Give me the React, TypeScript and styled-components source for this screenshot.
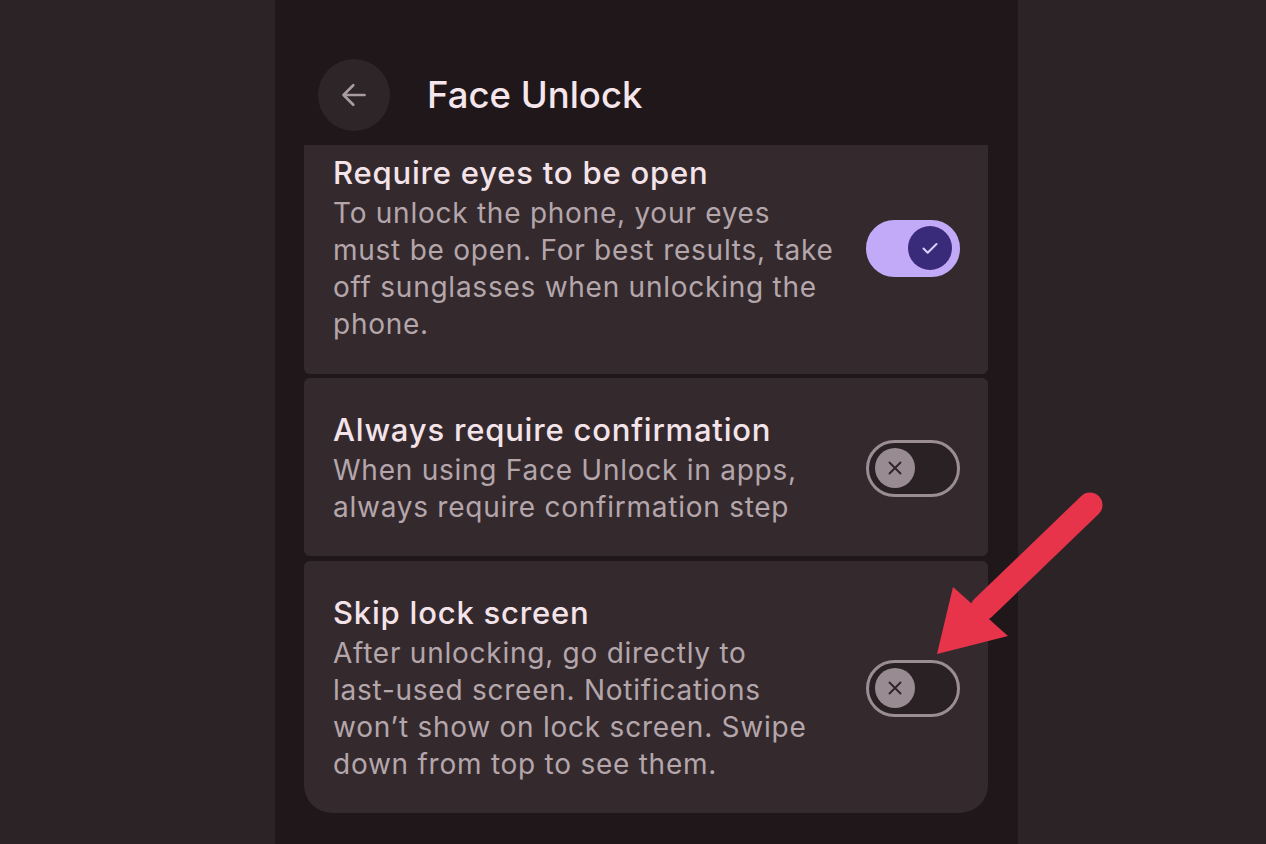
import React from "react"
import styled, { createGlobalStyle } from "styled-components"

const GlobalStyle = createGlobalStyle`
  html, body {
    margin: 0;
    padding: 0;
    background: #2c2327;
  }
  * {
    box-sizing: border-box;
  }
`

interface ISetting {
  title: string
  description: string
  enabled: boolean
}

// line breaks follow the wrapping on the device
const settings: ISetting[] = [
  {
    title: "Require eyes to be open",
    description:
      "To unlock the phone, your eyes\nmust be open. For best results, take\noff sunglasses when unlocking the\nphone.",
    enabled: true,
  },
  {
    title: "Always require confirmation",
    description:
      "When using Face Unlock in apps,\nalways require confirmation step",
    enabled: false,
  },
  {
    title: "Skip lock screen",
    description:
      "After unlocking, go directly to\nlast-used screen. Notifications\nwon’t show on lock screen. Swipe\ndown from top to see them.",
    enabled: false,
  },
]

const Toggle: React.FC<{ on: boolean }> = ({ on }) => {
  return (
    <Track $on={on}>
      <Thumb $on={on}>
        {on ? (
          <svg width="24" height="24" viewBox="0 0 24 24">
            <path
              d="M5.5 12.5l4.2 4.2L18.5 8"
              fill="none"
              stroke="#dcd0ff"
              strokeWidth="2"
              strokeLinecap="round"
              strokeLinejoin="round"
            />
          </svg>
        ) : (
          <svg width="22" height="22" viewBox="0 0 24 24">
            <path
              d="M6 6l12 12M18 6L6 18"
              fill="none"
              stroke="#2e2428"
              strokeWidth="2"
              strokeLinecap="round"
            />
          </svg>
        )}
      </Thumb>
    </Track>
  )
}

const SettingCard: React.FC<{ setting: ISetting; position: string }> = ({
  setting,
  position,
}) => {
  return (
    <Card $position={position}>
      <TextColumn>
        <CardTitle>{setting.title}</CardTitle>
        <CardDescription>{setting.description}</CardDescription>
      </TextColumn>
      <Toggle on={setting.enabled} />
    </Card>
  )
}

const App: React.FC = () => {
  return (
    <Page>
      <GlobalStyle />
      <Phone>
        <Header>
          <BackButton>
            <svg width="36" height="36" viewBox="0 0 24 24">
              <path
                d="M19 12H5.5M11.5 5.5L5 12l6.5 6.5"
                fill="none"
                stroke="#a99ca1"
                strokeWidth="1.8"
                strokeLinecap="round"
                strokeLinejoin="round"
              />
            </svg>
          </BackButton>
          <PageTitle>Face Unlock</PageTitle>
        </Header>
        <ScrollArea>
          <CardList>
            {settings.map((setting, index) => (
              <SettingCard
                key={setting.title}
                setting={setting}
                position={
                  index === settings.length - 1
                    ? "last"
                    : index === 0
                    ? "first"
                    : "middle"
                }
              />
            ))}
          </CardList>
        </ScrollArea>
      </Phone>
      <Arrow width="200" height="200" viewBox="0 0 200 200">
        <path
          d="M155 15 L48 118"
          stroke="#e8344b"
          strokeWidth="25"
          strokeLinecap="round"
          fill="none"
        />
        <polygon points="2,164 18,97 73,146" fill="#e8344b" />
      </Arrow>
    </Page>
  )
}

const Page = styled.div`
  position: relative;
  display: flex;
  justify-content: flex-start;
  width: 1266px;
  height: 844px;
  overflow: hidden;
  padding-left: 275px;
  background: #2c2327;
  font-family: Inter, "Open Sans", sans-serif;
`

const Phone = styled.div`
  display: flex;
  flex-direction: column;
  width: 743px;
  height: 844px;
  background: #1f1719;
`

const Header = styled.div`
  display: flex;
  flex-direction: row;
  align-items: center;
  gap: 37px;

  height: 145px;
  padding: 45px 0 0 43px;
`

const BackButton = styled.div`
  display: flex;
  align-items: center;
  justify-content: center;

  width: 72px;
  height: 72px;
  border-radius: 50%;
  background: #2e2528;
`

const PageTitle = styled.div`
  font-size: 36.5px;
  font-weight: 500;
  color: #f6e6ec;
`

const ScrollArea = styled.div`
  flex: 1;
  overflow: hidden;
  padding: 0 30px 0 29px;
`

const CardList = styled.div`
  display: flex;
  flex-direction: column;
  gap: 4px;
  margin-top: -23px;
`

const Card = styled.div<{ $position: string }>`
  display: flex;
  flex-direction: row;
  align-items: center;

  padding: ${({ $position }) =>
    $position === "first" ? "31px 28px 31px 29px" : "32px 28px 30px 29px"};
  margin-top: ${({ $position }) => ($position === "last" ? "1px" : "0")};
  border-radius: ${({ $position }) =>
    $position === "last" ? "6px 6px 28px 28px" : "6px"};
  background: #342a2e;
`

const TextColumn = styled.div`
  display: flex;
  flex-direction: column;
  margin-right: auto;
`

const CardTitle = styled.div`
  font-size: 31px;
  line-height: 40px;
  font-weight: 500;
  letter-spacing: 0.8px;
  color: #f4e4ea;
`

const CardDescription = styled.div`
  margin-top: 2px;
  font-size: 28px;
  line-height: 37px;
  letter-spacing: 0.75px;
  white-space: pre-line;
  color: #b4a6ab;
`

const Track = styled.div<{ $on: boolean }>`
  display: flex;
  align-items: center;
  justify-content: ${({ $on }) => ($on ? "flex-end" : "flex-start")};
  flex-shrink: 0;

  width: 94px;
  height: 57px;
  padding: ${({ $on }) => ($on ? "0 5px" : "0 6px")};
  border-radius: 29px;
  border: 3px solid ${({ $on }) => ($on ? "#c2aaf9" : "#9a8d93")};
  background: ${({ $on }) => ($on ? "#c2aaf9" : "#2a2125")};
`

const Thumb = styled.div<{ $on: boolean }>`
  display: flex;
  align-items: center;
  justify-content: center;

  width: ${({ $on }) => ($on ? "44px" : "40px")};
  height: ${({ $on }) => ($on ? "44px" : "40px")};
  border-radius: 50%;
  background: ${({ $on }) => ($on ? "#3a2a7a" : "#988b91")};
`

const Arrow = styled.svg`
  position: absolute;
  left: 935px;
  top: 490px;
`

export default App
